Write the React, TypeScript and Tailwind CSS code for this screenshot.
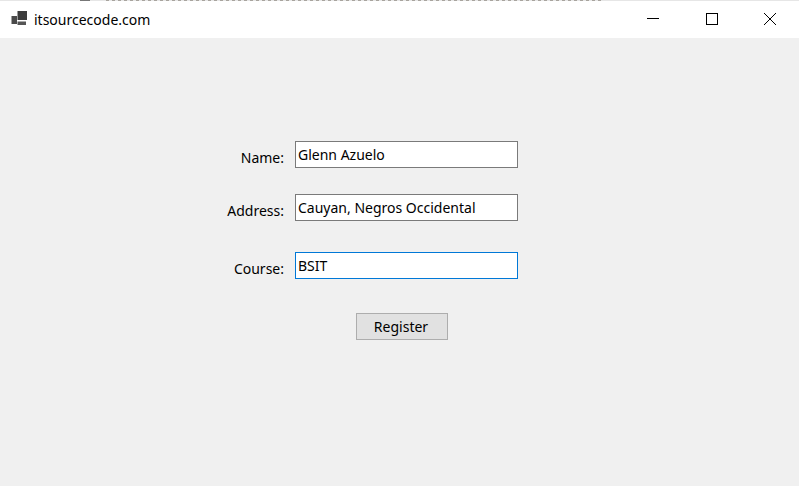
const font = "font-['Noto_Sans','Open_Sans',sans-serif]";

function Row({ label, value, focused }: { label: string; value: string; focused?: boolean }) {
  return (
    <div className="flex items-start">
      <label className="mt-[7px] w-[284px] text-right text-[14px] leading-[20px] text-black">{label}</label>
      <input
        readOnly
        value={value}
        className={`ml-[11px] h-[27px] w-[223px] border bg-white px-[2px] text-[14px] text-black outline-none ${focused ? 'border-[#0078d7]' : 'border-[#7a7a7a]'}`}
      />
    </div>
  );
}

export default function App() {
  return (
    <div className={`flex h-[486px] w-[799px] flex-col overflow-hidden bg-[#f0f0f0] ${font}`}>
      {/* sliver of the window behind */}
      <div className="flex h-[1px] shrink-0 bg-[#e6e6e6]">
        <div className="ml-[80px] w-[10px] bg-[#777777]" />
        <div className="ml-[16px] w-[495px] bg-[repeating-linear-gradient(90deg,#a8a49e_0,#a8a49e_3px,#e6e6e6_3px,#e6e6e6_6px)]" />
      </div>
      <header className="flex h-[37px] shrink-0 items-center bg-white pb-[1px]">
        <svg className="ml-[11px] h-[16px] w-[16px]" viewBox="0 0 16 16">
          <rect x="0.5" y="5" width="5.5" height="8" fill="#4a4a4a" />
          <rect x="6.5" y="0" width="9.5" height="9" fill="#3c3c3c" />
          <rect x="6.5" y="10.5" width="8.5" height="3.5" fill="#555555" />
        </svg>
        <span className="ml-[7px] text-[14px] text-black">itsourcecode.com</span>
        <div className="ml-auto flex items-center">
          <svg className="h-[12px] w-[12px]" viewBox="0 0 12 12">
            <path d="M0 5.5H12" stroke="#000" fill="none" />
          </svg>
          <svg className="ml-[47px] h-[12px] w-[12px]" viewBox="0 0 12 12">
            <rect x="0.5" y="0.5" width="11" height="11" stroke="#000" fill="none" />
          </svg>
          <svg className="ml-[46px] mr-[23px] h-[12px] w-[12px]" viewBox="0 0 12 12">
            <path d="M0 0L12 12M12 0L0 12" stroke="#000" fill="none" />
          </svg>
        </div>
      </header>
      <main className="flex flex-col pt-[103px]">
        <Row label="Name:" value="Glenn Azuelo" />
        <div className="h-[26px]" />
        <Row label="Address:" value="Cauyan, Negros Occidental" />
        <div className="h-[31px]" />
        <Row label="Course:" value="BSIT" focused />
        <button className="ml-[356px] mt-[34px] h-[27px] w-[92px] border border-[#adadad] bg-[#e1e1e1] pr-[2px] text-[14px] text-black">
          Register
        </button>
      </main>
    </div>
  );
}
